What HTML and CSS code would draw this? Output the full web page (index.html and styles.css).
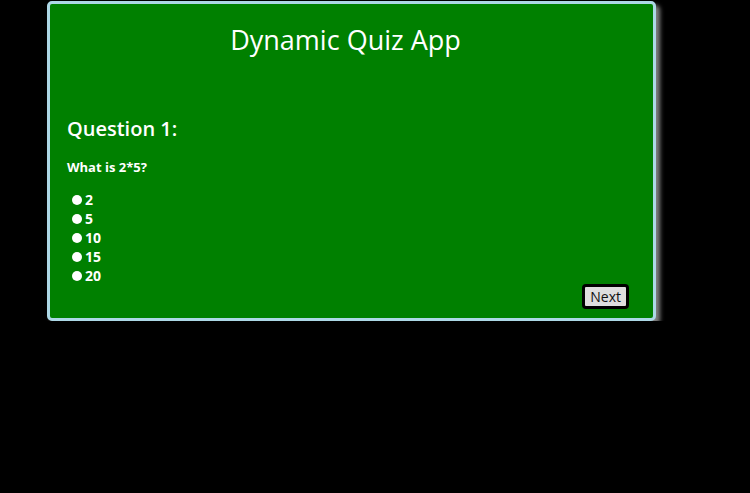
FILE: index.html
```html
<!DOCTYPE html>
<html lang="en">
<head>
<meta charset="utf-8">
<title>Dynamic Quiz App</title>
<link rel="stylesheet" href="styles.css">
</head>
<body>
<div class="quiz">
  <h1 class="title">Dynamic Quiz App</h1>
  <h2 class="q-number">Question 1:</h2>
  <p class="q-text">What is 2*5?</p>
  <ul class="options">
    <li class="option"><span class="radio"></span>2</li>
    <li class="option"><span class="radio"></span>5</li>
    <li class="option"><span class="radio"></span>10</li>
    <li class="option"><span class="radio"></span>15</li>
    <li class="option"><span class="radio"></span>20</li>
  </ul>
  <div class="footer"><button class="next">Next</button></div>
</div>
</body>
</html>
```
FILE: styles.css
```css
html, body {
  margin: 0;
  padding: 0;
  background: #000;
  font-family: "Open Sans", "Liberation Sans", sans-serif;
  color: #fff;
}
.quiz {
  box-sizing: border-box;
  width: 609px;
  height: 320px;
  margin: 1px 0 0 47px;
  background: #008000;
  border: 3px solid #add8e6;
  border-radius: 5px;
  box-shadow: 4px 4px 4px #808080;
  padding: 0 24px 0 17px;
  display: flex;
  flex-direction: column;
}
.title {
  margin: 17px 0 0;
  padding-right: 5px;
  font-size: 27px;
  font-weight: 500;
  line-height: 38px;
  text-align: center;
}
.q-number {
  margin: 56px 0 0;
  font-size: 20px;
  font-weight: 600;
  line-height: 27px;
}
.q-text {
  margin: 16px 0 0;
  font-size: 13px;
  font-weight: 700;
  line-height: 18px;
}
.options {
  list-style: none;
  margin: 14px 0 0;
  padding: 0 0 0 5px;
}
.option {
  display: flex;
  align-items: center;
  gap: 3px;
  font-size: 14px;
  font-weight: 700;
  line-height: 19px;
}
.radio {
  width: 10px;
  height: 10px;
  border-radius: 50%;
  background: #fff;
}
.footer {
  display: flex;
  justify-content: flex-end;
  margin-top: -1px;
}
.next {
  box-sizing: border-box;
  height: 25px;
  padding: 0 5px;
  border: 3px solid #000;
  border-radius: 4px;
  background: #dedede;
  color: #111;
  font-family: "Open Sans", "Liberation Sans", sans-serif;
  font-size: 14px;
  line-height: 19px;
}
```
